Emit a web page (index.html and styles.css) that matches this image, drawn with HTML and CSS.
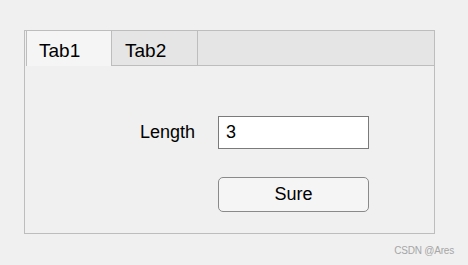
FILE: index.html
```html
<!DOCTYPE html>
<html lang="en">

<head>
    <meta charset="UTF-8">
    <title>Tabs</title>
    <link rel="stylesheet" href="styles.css">
</head>

<body>
    <div class="tab-panel">
        <div class="tab-bar">
            <div class="tab active">Tab1</div>
            <div class="tab">Tab2</div>
        </div>
        <div class="tab-body">
            <div class="field-grid">
                <label for="length" class="field-label">Length</label>
                <input type="text" id="length" class="field-input" value="3">
                <span></span>
                <button type="button" class="sure-button">Sure</button>
            </div>
        </div>
    </div>
    <div class="credit">CSDN @Ares</div>
</body>

</html>
```

FILE: styles.css
```css
:root {
    --bg: #f0f0f0;
    --tab-bg: #e5e5e5;
    --tab-active-bg: #f5f5f5;
    --line: #bdbdbd;
    --field-border: #7a7a7a;
    --font: "Liberation Sans", Arial, sans-serif;
}

html,
body {
    margin: 0;
    padding: 0;
    background-color: var(--bg);
    font-family: var(--font);
    color: #000;
}

.tab-panel {
    box-sizing: border-box;
    width: 411px;
    height: 204px;
    margin: 30px 0 0 24px;
    border: 1px solid var(--line);
}

.tab-bar {
    display: flex;
    height: 34px;
    margin-left: 1px;
    background-color: var(--tab-bg);
    border-bottom: 1px solid var(--line);
}

.tab {
    box-sizing: border-box;
    width: 86px;
    height: 34px;
    padding: 10px 0 0 13px;
    font-size: 19px;
    line-height: 20px;
    border-right: 1px solid var(--line);
}

.tab.active {
    height: 35px;
    padding-left: 12px;
    border-left: 1px solid var(--line);
    background-color: var(--tab-active-bg);
}

.tab-body {
    padding: 50px 0 0 115px;
}

.field-grid {
    display: grid;
    grid-template-columns: 78px 151px;
    row-gap: 28px;
    align-items: center;
}

.field-label {
    font-size: 18px;
}

.field-input {
    box-sizing: border-box;
    width: 151px;
    height: 33px;
    margin: 0;
    padding: 0 7px;
    border: 1px solid var(--field-border);
    border-radius: 0;
    background: #fff;
    font-family: var(--font);
    font-size: 18px;
    color: #000;
    outline: none;
}

.sure-button {
    box-sizing: border-box;
    width: 151px;
    height: 35px;
    margin: 0;
    padding: 0;
    border: 1px solid #8a8a8a;
    border-radius: 5px;
    background-color: var(--tab-active-bg);
    font-family: var(--font);
    font-size: 18px;
    color: #000;
}

.credit {
    margin-top: 11px;
    padding-right: 14px;
    text-align: right;
    font-size: 10px;
    line-height: 12px;
    letter-spacing: -0.2px;
    color: #a6a6a6;
}
```
